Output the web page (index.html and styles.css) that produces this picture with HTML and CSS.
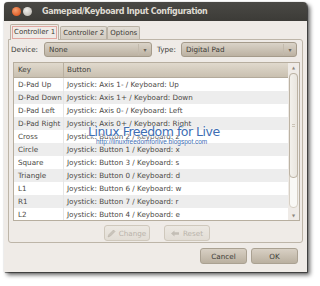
FILE: index.html
```html
<!DOCTYPE html>
<html>
<head>
<meta charset="utf-8">
<link rel="stylesheet" href="styles.css">
</head>
<body>
<div class="win">
  <div class="titlebar">
    <span class="wbtn close"></span>
    <span class="wbtn min"></span>
    <span class="title">Gamepad/Keyboard Input Configuration</span>
  </div>
  <div class="content">
    <div class="tabs">
      <div class="tab active"><span class="focus">Controller 1</span></div>
      <div class="tab">Controller 2</div>
      <div class="tab">Options</div>
    </div>
    <div class="page">
      <div class="selrow">
        <span class="lbl">Device:</span>
        <div class="combo dev"><span class="ctext">None</span><span class="carr">▾</span></div>
        <span class="lbl type">Type:</span>
        <div class="combo typ"><span class="ctext">Digital Pad</span><span class="carr">▾</span></div>
      </div>
      <div class="list">
        <div class="table">
          <div class="hdr"><div class="c1">Key</div><div class="c2">Button</div></div>
          <div class="r"><div class="c1">D-Pad Up</div><div class="c2">Joystick: Axis 1- / Keyboard: Up</div></div>
          <div class="r alt"><div class="c1">D-Pad Down</div><div class="c2">Joystick: Axis 1+ / Keyboard: Down</div></div>
          <div class="r"><div class="c1">D-Pad Left</div><div class="c2">Joystick: Axis 0- / Keyboard: Left</div></div>
          <div class="r alt"><div class="c1">D-Pad Right</div><div class="c2">Joystick: Axis 0+ / Keyboard: Right</div></div>
          <div class="r"><div class="c1">Cross</div><div class="c2">Joystick: Button 2 / Keyboard: z</div></div>
          <div class="r alt"><div class="c1">Circle</div><div class="c2">Joystick: Button 1 / Keyboard: x</div></div>
          <div class="r"><div class="c1">Square</div><div class="c2">Joystick: Button 3 / Keyboard: s</div></div>
          <div class="r alt"><div class="c1">Triangle</div><div class="c2">Joystick: Button 0 / Keyboard: d</div></div>
          <div class="r"><div class="c1">L1</div><div class="c2">Joystick: Button 6 / Keyboard: w</div></div>
          <div class="r alt"><div class="c1">R1</div><div class="c2">Joystick: Button 7 / Keyboard: r</div></div>
          <div class="r"><div class="c1">L2</div><div class="c2">Joystick: Button 4 / Keyboard: e</div></div>
        </div>
        <div class="sb">
          <span class="sarr">▲</span>
          <div class="trough"><div class="thumb"><span class="grip"></span></div></div>
          <span class="sarr">▼</span>
        </div>
      </div>
      <div class="actions">
        <div class="btn dis">
          <svg width="9" height="9" viewBox="0 0 9 9"><path d="M1 8 L2 5.5 L6.5 1 L8 2.5 L3.5 7 Z" fill="#c9c4bb" stroke="#b8b2a8" stroke-width="0.6"/></svg>
          <span>Change</span>
        </div>
        <div class="btn dis">
          <svg width="10" height="9" viewBox="0 0 10 9"><path d="M1 4.5 L4.5 1.5 L4.5 3.3 L9 3.3 L9 5.7 L4.5 5.7 L4.5 7.5 Z" fill="#c3beb5"/></svg>
          <span>Reset</span>
        </div>
      </div>
    </div>
    <div class="dlgbtns">
      <div class="btn">Cancel</div>
      <div class="btn">OK</div>
    </div>
  </div>
  <div class="wm">
    <div class="wm1">Linux Freedom for Live</div>
    <div class="wm2">http://linuxfreedomforlive.blogspot.com</div>
  </div>
</div>
</body>
</html>
```
FILE: styles.css
```css
* { box-sizing: border-box; }
html, body { margin: 0; padding: 0; background: #ffffff; }
body { width: 320px; height: 286px; overflow: hidden; font-family: "DejaVu Sans", sans-serif; color: #3c3b37; }

.win {
  position: relative;
  margin: 2px 0 0 4px;
  width: 303px;
  height: 270px;
  background: #efebe7;
  border-radius: 4px 4px 0 0;
  box-shadow: 3px 3px 4px rgba(0,0,0,0.6), 1px 1px 1px rgba(0,0,0,0.5), 0 0 1px rgba(0,0,0,0.4);
  display: flex;
  flex-direction: column;
}

.titlebar {
  height: 19px;
  background: linear-gradient(#4a4945, #3c3b37);
  border-radius: 4px 4px 0 0;
  display: flex;
  align-items: center;
  padding-left: 8px;
}
.wbtn { width: 9px; height: 9px; border-radius: 50%; margin-right: 2px; }
.close { background: radial-gradient(circle at 40% 35%, #f5a070, #e0602a 70%, #b94a20); }
.min { background: radial-gradient(circle at 40% 35%, #f0efec, #c4c1bb 70%, #9a968f); }
.title { margin-left: 8px; font-weight: bold; font-size: 8px; letter-spacing: -0.4px; color: #dfdbd2; white-space: nowrap; }

.content { flex: 1; padding: 3px 4px 0 4px; display: flex; flex-direction: column; }

.tabs { display: flex; align-items: flex-end; height: 15px; padding-left: 2px; position: relative; z-index: 1; }
.tab {
  height: 13px;
  padding: 0 2px;
  font-size: 7px;
  line-height: 12px;
  background: linear-gradient(#e2ddd5, #d3ccc1);
  border: 1px solid #b9b1a4;
  border-bottom: none;
  border-radius: 2px 2px 0 0;
  margin-right: 0;
  white-space: nowrap;
}
.tab.active {
  height: 16px;
  margin-bottom: -1px;
  margin-right: 1px;
  background: #efebe7;
  padding: 1px 1px 0 1px;
}
.tab.active .focus {
  display: block;
  border: 1px solid #e0a7a1;
  padding: 0 1px;
  line-height: 11px;
  height: 13px;
}

.page {
  height: 204px;
  border: 1px solid #bdb5a8;
  border-radius: 0 3px 3px 3px;
  padding: 2px 2px 0 4px;
  display: flex;
  flex-direction: column;
}

.selrow { display: flex; align-items: center; height: 15px; margin-left: -2px; }
.lbl { font-size: 7.2px; }
.lbl.type { margin-left: 5px; }
.combo {
  height: 15px;
  border: 1px solid #a59b8b;
  border-radius: 3px;
  background: linear-gradient(#dad3c8, #bcb2a2);
  display: flex;
  align-items: center;
  font-size: 7.2px;
  position: relative;
}
.combo.dev { margin-left: 6px; width: 108px; }
.combo.typ { margin-left: 5px; width: 116px; }
.ctext { flex: 1; padding-left: 4px; }
.carr { width: 13px; text-align: center; font-size: 6px; color: #6a6358; border-left: 1px solid #c3baac; line-height: 11px; }

.list {
  margin-top: 5px;
  height: 159px;
  border: 1px solid #b7ae9f;
  display: flex;
  background: #efebe7;
}
.table { width: 275px; background: #fff; overflow: hidden; }
.hdr {
  display: flex;
  height: 15px;
  background: linear-gradient(#e0d9cd, #c9c0b0);
  border-bottom: 1px solid #b3aa9b;
  font-size: 7.2px;
  line-height: 14px;
}
.hdr .c1 { border-right: 1px solid #b8af9f; }
.c1 { width: 50px; padding-left: 4px; white-space: nowrap; overflow: hidden; }
.c2 { flex: 1; padding-left: 3px; white-space: nowrap; overflow: hidden; }
.r { display: flex; height: 13px; font-size: 7.2px; line-height: 13px; color: #4a4844; }
.r .c1 { border-right: 1px solid #e6e6e6; }
.r.alt { background: #ededed; }

.sb { flex: 1; display: flex; flex-direction: column; align-items: center; padding: 0 1px; }
.sarr { font-size: 4px; color: #8d867c; height: 8px; line-height: 8px; margin-top: 1px; }
.trough {
  flex: 1;
  width: 9px;
  margin: 1px 0 3px;
  border: 1px solid #d6cfc4;
  border-radius: 4px;
  background: #f9f8f5;
  display: flex;
  flex-direction: column;
}
.thumb {
  height: 105px;
  margin: -1px;
  border: 1px solid #bcb3a4;
  border-radius: 4px;
  background: linear-gradient(90deg, #f3f1ec, #e9e5de);
  display: flex;
  align-items: center;
  justify-content: center;
}
.grip { width: 3px; height: 3px; border-top: 1px solid #cbc3b6; border-bottom: 1px solid #cbc3b6; }

.actions { display: flex; justify-content: center; gap: 14px; margin-top: 4px; }
.btn {
  height: 16px;
  border: 1px solid #aaa192;
  border-radius: 3px;
  background: linear-gradient(#d8d0c4, #bab0a0);
  font-size: 7.2px;
  display: flex;
  align-items: center;
  justify-content: center;
  gap: 3px;
}
.actions .btn { width: 46px; }
.btn.dis {
  background: linear-gradient(#ece8e2, #e2ddd5);
  border-color: #cfc8bc;
  color: #b9b3aa;
}

.dlgbtns { display: flex; justify-content: flex-end; gap: 4px; margin-top: 5px; padding-right: 5px; }
.dlgbtns .btn { width: 47px; }

.wm { position: absolute; left: 84px; top: 122px; color: #3d6db3; }
.wm1 {
  font-family: "DejaVu Sans", sans-serif;
  font-size: 12.5px;
  letter-spacing: -0.5px;
  text-shadow: 0 0 2px #fff, 0 0 3px #fff, 1px 1px 2px rgba(255,255,255,0.9);
}
.wm2 {
  margin-left: 8px;
  margin-top: -1px;
  font-family: "Liberation Sans", sans-serif;
  font-size: 6.5px;
  text-shadow: 0 0 2px #fff;
}
```
